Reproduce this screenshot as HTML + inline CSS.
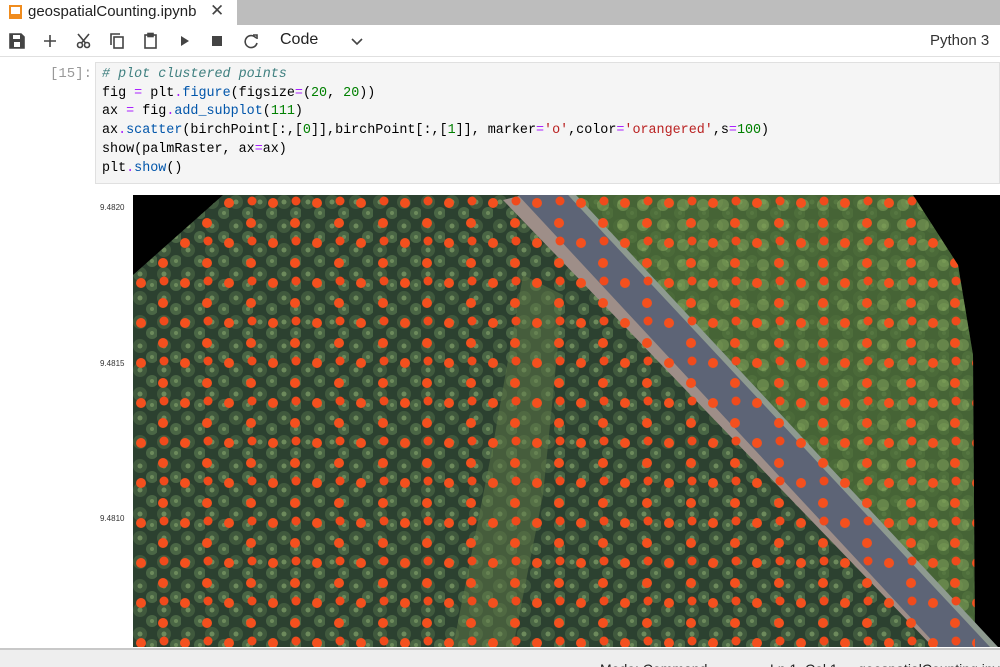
<!DOCTYPE html>
<html><head><meta charset="utf-8"><style>
*{margin:0;padding:0;box-sizing:border-box}
body{width:1000px;height:667px;overflow:hidden;background:#fff;font-family:"Liberation Sans",sans-serif;position:relative}
.tabbar{position:absolute;left:0;top:0;width:1000px;height:25px;background:#bdbdbd}
.tab{position:absolute;left:0;top:0;width:237px;height:25px;background:#fff;font-size:15px;color:#222}
.tb{position:absolute;left:0;top:25px;width:1000px;height:32px;background:#fff;border-bottom:1px solid #e0e0e0}
.cell{position:absolute;left:95px;top:62px;width:905px;height:122px;background:#f5f5f5;border:1px solid #e0e0e0}
pre{position:absolute;left:102px;top:66px;font-family:"Liberation Mono",monospace;font-size:13.4px;line-height:18.7px;color:#000}
.c{color:#408080;font-style:italic}.o{color:#aa22ff}.n{color:#008000}.f{color:#0055aa}.s{color:#ba2121}
.yl{position:absolute;left:100px;font-size:8px;color:#333}
.status{position:absolute;left:0;top:648px;width:1000px;height:19px;background:#eeeeee;border-top:2px solid #c8c8c8;font-size:14px;color:#222;overflow:hidden}
</style></head><body>
<div class="tabbar"><div class="tab">
<div style="position:absolute;left:9px;top:5px;width:13px;height:14px;background:#f08c1e;border:2px solid #f08c1e"><div style="width:9px;height:7px;background:#fff"></div></div>
<span style="position:absolute;left:28px;top:3px">geospatialCounting.ipynb</span>
<span style="position:absolute;left:210px;top:1px;font-size:17px;color:#444">✕</span></div></div>
<div class="tb">
<svg width="1000" height="32" style="position:absolute;left:0;top:0" fill="none" stroke="#444" stroke-width="1.6">
<path d="M10 9h11l3 3v11H10z" fill="#444"/><rect x="13" y="10" width="7" height="4" fill="#fff" stroke="none"/><rect x="14" y="17" width="6" height="5" fill="#fff" stroke="none"/>
<path d="M50 10v12M44 16h12"/>
<circle cx="80" cy="20" r="2.5"/><circle cx="87" cy="20" r="2.5"/><path d="M81.5 18L89 9M85.5 18L78 9"/>
<rect x="114" y="12" width="9" height="11"/><path d="M111 20V9h9"/>
<rect x="145" y="10" width="11" height="13"/><rect x="148" y="8.5" width="5" height="3" fill="#444"/>
<path d="M181 11l8 5-8 5z" fill="#444" stroke="none"/>
<rect x="212" y="11" width="10" height="10" fill="#444" stroke="none"/>
<path d="M256 13a6 6 0 1 0 1 5"/><path d="M253 10h4v4"/>
<path d="M352 14l5 5 5-5"/>
</svg>
<span style="position:absolute;left:280px;top:6px;font-size:16px;color:#222">Code</span>
<span style="position:absolute;left:930px;top:7px;font-size:15px;color:#333">Python 3</span>
</div>
<span style="position:absolute;left:50px;top:66px;font-family:'Liberation Mono',monospace;font-size:14px;color:#999">[15]:</span>
<div class="cell"></div>
<pre><span class="c"># plot clustered points</span>
fig <span class="o">=</span> plt<span class="o">.</span><span class="f">figure</span>(figsize<span class="o">=</span>(<span class="n">20</span>, <span class="n">20</span>))
ax <span class="o">=</span> fig<span class="o">.</span><span class="f">add_subplot</span>(<span class="n">111</span>)
ax<span class="o">.</span><span class="f">scatter</span>(birchPoint[:,[<span class="n">0</span>]],birchPoint[:,[<span class="n">1</span>]], marker<span class="o">=</span><span class="s">'o'</span>,color<span class="o">=</span><span class="s">'orangered'</span>,s<span class="o">=</span><span class="n">100</span>)
show(palmRaster, ax<span class="o">=</span>ax)
plt<span class="o">.</span><span class="f">show</span>()</pre>
<div class="yl" style="top:203px">9.4820</div>
<div class="yl" style="top:359px">9.4815</div>
<div class="yl" style="top:514px">9.4810</div>
<svg width="867" height="452" style="position:absolute;left:133px;top:195px">
<defs>
<pattern id="tex" width="24" height="24" patternUnits="userSpaceOnUse">
<rect width="24" height="24" fill="#2c4130"/>
<circle cx="7" cy="7" r="7" fill="#40593d"/><circle cx="19" cy="18" r="6" fill="#4a6645"/><circle cx="7" cy="7" r="2.5" fill="#6d8a5c"/><circle cx="19" cy="18" r="2" fill="#6d8a5c"/>
</pattern>
<pattern id="tex2" width="20" height="20" patternUnits="userSpaceOnUse">
<rect width="20" height="20" fill="#4f7038"/><circle cx="10" cy="10" r="6" fill="#7a9c52"/>
</pattern>
<pattern id="dots" width="44" height="40" patternUnits="userSpaceOnUse">
<circle cx="8" cy="8" r="5" fill="#f4501e"/><circle cx="30" cy="28" r="5" fill="#f4501e"/><circle cx="31" cy="6" r="4.5" fill="#f04a1c"/>
</pattern>
<clipPath id="cp"><polygon points="90,0 780,0 825,70 840,160 842,452 0,452 0,80"/></clipPath>
</defs>
<rect width="867" height="452" fill="#000"/>
<polygon points="90,0 780,0 825,70 840,160 842,452 0,452 0,80" fill="url(#tex)"/>
<polygon points="440,0 780,0 825,70 840,160 842,452 " fill="url(#tex2)" opacity="0.75"/>
<polygon points="390,80 430,100 410,300 380,452 320,452 360,250" fill="#607a48" opacity="0.5"/>
<polygon points="370,5 390,0 825,452 800,452" fill="#9e8e88"/>
<polygon points="385,0 435,0 860,452 805,452" fill="#5d6476"/>
<polygon points="435,0 443,0 865,452 857,452" fill="#8e9a90"/>
<rect width="867" height="452" fill="url(#dots)" clip-path="url(#cp)"/>
</svg>
<div class="status"><span style="position:absolute;left:600px;top:11px">Mode: Command</span>
<span style="position:absolute;left:770px;top:11px">Ln 1, Col 1</span>
<span style="position:absolute;left:858px;top:11px">geospatialCounting.ipynb</span></div>
</body></html>
